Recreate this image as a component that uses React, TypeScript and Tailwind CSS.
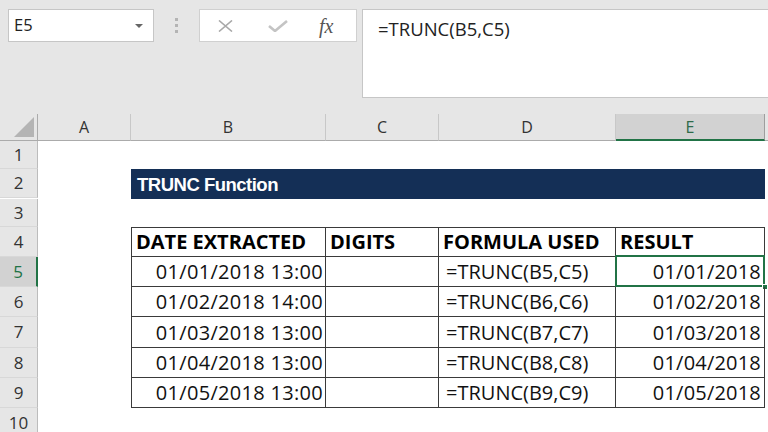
import React from 'react';

const colW = ['w-[93px]', 'w-[195px]', 'w-[113px]', 'w-[177px]', 'w-[149px]', 'w-[3px]'];
const colNames = ['A', 'B', 'C', 'D', 'E', ''];

const rowH = [
  'h-[28px]',
  'h-[29px]',
  'h-[28px]',
  'h-[30px]',
  'h-[30px]',
  'h-[30px]',
  'h-[31px]',
  'h-[30px]',
  'h-[30px]',
  'h-[30px]',
];

const tableRows = [
  ['01/01/2018 13:00', '', '=TRUNC(B5,C5)', '01/01/2018'],
  ['01/02/2018 14:00', '', '=TRUNC(B6,C6)', '01/02/2018'],
  ['01/03/2018 13:00', '', '=TRUNC(B7,C7)', '01/03/2018'],
  ['01/04/2018 13:00', '', '=TRUNC(B8,C8)', '01/04/2018'],
  ['01/05/2018 13:00', '', '=TRUNC(B9,C9)', '01/05/2018'],
];

const headers = ['DATE EXTRACTED', 'DIGITS', 'FORMULA USED', 'RESULT'];

function RowHeader({ n, h, active }: { n: number; h: string; active?: boolean }) {
  return (
    <div
      className={`${h} w-[38px] shrink-0 flex items-center justify-center text-[17px] border-b border-[#d8d8d8] ${
        active
          ? 'bg-[#d2d2d2] text-[#217346] border-r-2 border-r-[#217346]'
          : 'bg-[#e6e6e6] text-[#333] border-r border-r-[#bcbcbc]'
      }`}
    >
      {n}
    </div>
  );
}

function FormulaBar() {
  return (
    <div className="h-[114px] flex items-start pt-[9px] pl-[8px]">
      {/* Name box */}
      <div className="w-[146px] h-[33px] bg-white border border-[#c6c6c6] flex items-center justify-between pl-[5px] pr-[10px]">
        <span className="text-[16.5px] text-[#222]">E5</span>
        <span className="w-0 h-0 border-l-[4px] border-r-[4px] border-t-[4px] border-l-transparent border-r-transparent border-t-[#666]" />
      </div>
      {/* Dots */}
      <div className="w-[45px] h-[33px] flex flex-col items-center justify-center gap-[3px]">
        <span className="w-[3px] h-[3px] bg-[#b4b4b4]" />
        <span className="w-[3px] h-[3px] bg-[#b4b4b4]" />
        <span className="w-[3px] h-[3px] bg-[#b4b4b4]" />
      </div>
      {/* Buttons */}
      <div className="w-[158px] h-[33px] bg-white border border-[#d0d0d0] flex items-center">
        <svg className="ml-[17px] w-[17px] h-[12px]" viewBox="0 0 17 12" fill="none" stroke="#a8a8a8" strokeWidth="1.6">
          <path d="M2 0.5 L15 11.5 M15 0.5 L2 11.5" />
        </svg>
        <svg className="ml-[34px] w-[20px] h-[12px]" viewBox="0 0 20 12" fill="none" stroke="#c4c4c4" strokeWidth="2.6">
          <path d="M1 6 L7 11 L19 1" />
        </svg>
        <span className="ml-[31px] text-[20px] italic text-[#555] leading-none" style={{ fontFamily: '"Liberation Serif", serif' }}>
          fx
        </span>
      </div>
      {/* Formula input */}
      <div className="ml-[5px] flex-1 h-[89px] bg-white border-t border-l border-b border-[#c6c6c6] pl-[15px] pt-[5px]">
        <span className="text-[18.5px] text-[#222]">=TRUNC(B5,C5)</span>
      </div>
    </div>
  );
}

function ColumnHeaders() {
  return (
    <div className="flex h-[27px]">
      <div className="w-[38px] shrink-0 bg-[#e6e6e6] border-r border-b border-[#ababab] relative">
        <div className="absolute right-[3px] bottom-[3px] w-0 h-0 border-b-[20px] border-l-[20px] border-b-[#b4b4b4] border-l-transparent" />
      </div>
      {colNames.map((c, i) => (
        <div
          key={i}
          className={`${colW[i]} shrink-0 flex items-center justify-center text-[16px] border-r ${
            c === 'E'
              ? 'bg-[#d2d2d2] text-[#2e6b4a] border-r-[#9e9e9e] border-b-2 border-b-[#217346]'
              : 'bg-[#e6e6e6] text-[#333] border-r-[#c8c8c8] border-b border-b-[#ababab]'
          } ${i === 5 ? 'border-r-0' : ''}`}
        >
          {c}
        </div>
      ))}
    </div>
  );
}

export default function App() {
  return (
    <div className="w-[768px] h-[432px] overflow-hidden bg-[#e6e6e6]" style={{ fontFamily: '"Open Sans", sans-serif' }}>
      <FormulaBar />
      <ColumnHeaders />

      {/* Row 1 */}
      <div className="flex bg-white">
        <RowHeader n={1} h={rowH[0]} />
        <div className="flex-1" />
      </div>

      {/* Row 2 - title */}
      <div className="flex bg-white">
        <RowHeader n={2} h={rowH[1]} />
        <div className="w-[93px] shrink-0" />
        <div
          className="w-[634px] shrink-0 bg-[#142f56] flex items-center pl-[6px] text-white text-[18.5px] font-bold tracking-[-0.5px] pt-[2px]"
          style={{ fontFamily: '"Liberation Sans", Arial, sans-serif' }}
        >
          TRUNC Function
        </div>
        <div className="flex-1" />
      </div>

      {/* Row 3 */}
      <div className="flex bg-white">
        <RowHeader n={3} h={rowH[2]} />
        <div className="flex-1" />
      </div>

      {/* Row 4 - table headers */}
      <div className="flex bg-white">
        <RowHeader n={4} h={rowH[3]} />
        <div className="w-[93px] shrink-0" />
        {headers.map((t, i) => (
          <div
            key={i}
            className={`${colW[i + 1]} shrink-0 ${rowH[3]} border-t border-r border-b border-[#3a3a3a] ${
              i === 0 ? 'border-l' : ''
            } flex items-end pb-[1px] pl-[4px] text-[20px] font-bold text-black leading-[26px] whitespace-nowrap overflow-hidden`}
          >
            {t}
          </div>
        ))}
      </div>

      {tableRows.map((r, ri) => {
        const h = rowH[ri + 4];
        return (
          <div key={ri} className="flex bg-white">
            <RowHeader n={ri + 5} h={h} active={ri === 0} />
            <div className="w-[93px] shrink-0" />
            <div className={`w-[195px] shrink-0 ${h} border-l border-r border-b border-[#3a3a3a] flex items-end justify-end pr-[2px] pb-[1px] text-[20px] tracking-[0.3px] text-[#111] leading-[26px]`}>
              {r[0]}
            </div>
            <div className={`w-[113px] shrink-0 ${h} border-r border-b border-[#3a3a3a]`} />
            <div className={`w-[177px] shrink-0 ${h} border-r border-b border-[#3a3a3a] flex items-end pl-[7px] pb-[1px] text-[20px] text-[#111] leading-[26px]`}>
              {r[2]}
            </div>
            <div className={`w-[149px] shrink-0 ${h} border-r border-b border-[#3a3a3a] flex items-end justify-end pr-[3px] pb-[1px] text-[20px] tracking-[0.2px] text-[#111] leading-[26px] relative`}>
              {r[3]}
              {ri === 0 && (
                <>
                  <div className="absolute left-[-1px] top-[-2px] right-[-1px] bottom-[-1px] border-2 border-[#217346]" />
                  <div className="absolute right-[-4px] bottom-[-4px] w-[6px] h-[6px] bg-[#217346] border border-white" />
                </>
              )}
            </div>
            <div className="flex-1" />
          </div>
        );
      })}

      {/* Row 10 */}
      <div className="flex bg-white">
        <RowHeader n={10} h={rowH[9]} />
        <div className="flex-1" />
      </div>
    </div>
  );
}
